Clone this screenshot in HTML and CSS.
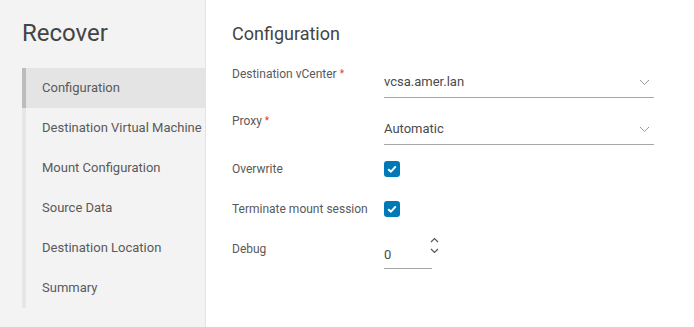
FILE: index.html
```html
<!DOCTYPE html>
<html>
<head>
<meta charset="utf-8">
<link rel="stylesheet" href="styles.css">
</head>
<body>
<div class="page">
  <aside class="sidebar">
    <h1 class="side-title">Recover</h1>
    <nav class="steps">
      <div class="step active">Configuration</div>
      <div class="step">Destination Virtual Machine</div>
      <div class="step">Mount Configuration</div>
      <div class="step">Source Data</div>
      <div class="step">Destination Location</div>
      <div class="step">Summary</div>
    </nav>
  </aside>
  <main class="main">
    <h2 class="main-title">Configuration</h2>
    <div class="row row-select first">
      <label class="label">Destination vCenter <span class="req">*</span></label>
      <div class="select">
        <span class="value">vcsa.amer.lan</span>
        <svg class="chev" width="11" height="7" viewBox="0 0 11 7"><path d="M1 1 L5.5 5.5 L10 1" fill="none" stroke="#9a9a9a" stroke-width="1"/></svg>
      </div>
    </div>
    <div class="row row-select">
      <label class="label">Proxy <span class="req">*</span></label>
      <div class="select">
        <span class="value">Automatic</span>
        <svg class="chev" width="11" height="7" viewBox="0 0 11 7"><path d="M1 1 L5.5 5.5 L10 1" fill="none" stroke="#9a9a9a" stroke-width="1"/></svg>
      </div>
    </div>
    <div class="row row-check first-check">
      <label class="label">Overwrite</label>
      <span class="checkbox"><svg width="16" height="16" viewBox="0 0 16 16"><path d="M4.2 8.2 L6.9 10.6 L11.8 5.4" fill="none" stroke="#fff" stroke-width="2"/></svg></span>
    </div>
    <div class="row row-check">
      <label class="label">Terminate mount session</label>
      <span class="checkbox"><svg width="16" height="16" viewBox="0 0 16 16"><path d="M4.2 8.2 L6.9 10.6 L11.8 5.4" fill="none" stroke="#fff" stroke-width="2"/></svg></span>
    </div>
    <div class="row row-number">
      <label class="label">Debug</label>
      <div class="number">
        <span class="num-value">0</span>
        <span class="spin">
          <svg width="9" height="6" viewBox="0 0 9 6"><path d="M1 5 L4.5 1.5 L8 5" fill="none" stroke="#555" stroke-width="1.2"/></svg>
          <svg width="9" height="6" viewBox="0 0 9 6"><path d="M1 1 L4.5 4.5 L8 1" fill="none" stroke="#555" stroke-width="1.2"/></svg>
        </span>
      </div>
    </div>
  </main>
</div>
</body>
</html>
```

FILE: styles.css
```css
html, body {
  margin: 0;
  padding: 0;
  background: #fff;
  font-family: Roboto, "Liberation Sans", sans-serif;
}
.page {
  display: flex;
  width: 694px;
  height: 327px;
}
.sidebar {
  flex: none;
  width: 206px;
  background: #f3f3f3;
  border-right: 1px solid #e4e4e4;
  padding-left: 22px;
  box-sizing: border-box;
}
.side-title {
  margin: 19px 0 0 0;
  font-size: 24px;
  line-height: 28px;
  font-weight: 400;
  color: #444;
}
.steps {
  margin-top: 21px;
  border-left: 4px solid #e6e6e6;
}
.step {
  height: 40px;
  line-height: 40px;
  padding-left: 16px;
  font-size: 13px;
  color: #5a5a5a;
  white-space: nowrap;
}
.step.active {
  background: #e4e4e4;
  margin-left: -4px;
  border-left: 4px solid #bcbcbc;
}
.main {
  flex: 1;
  padding-left: 26px;
  padding-right: 40px;
}
.main-title {
  margin: 22px 0 0 0;
  font-size: 18px;
  line-height: 24px;
  font-weight: 400;
  color: #444;
}
.row {
  display: grid;
  grid-template-columns: 152px 270px;
  align-items: start;
}
.label {
  font-size: 12px;
  line-height: 16px;
  color: #5a5a5a;
}
.req {
  color: #d0402a;
  font-size: 10px;
  position: relative;
  top: -1px;
}
.row-select.first {
  margin-top: 20px;
}
.row-select {
  margin-top: 15px;
}
.select {
  height: 31px;
  border-bottom: 1px solid #a6a6a6;
  display: flex;
  align-items: center;
  justify-content: space-between;
}
.value {
  font-size: 13px;
  color: #4a4a4a;
}
.chev {
  margin-right: 4px;
  margin-top: 2px;
}
.row-check {
  height: 24px;
  align-items: center;
  margin-top: 16px;
}
.row-check.first-check {
  margin-top: 12px;
}
.checkbox {
  width: 16px;
  height: 16px;
  border-radius: 3px;
  background: #0079b8;
  display: block;
}
.checkbox svg {
  display: block;
}
.row-number {
  margin-top: 20px;
}
.number {
  width: 48px;
  height: 27px;
  border-bottom: 1px solid #a6a6a6;
  position: relative;
}
.num-value {
  position: absolute;
  left: 0;
  top: 6px;
  font-size: 13px;
  line-height: 16px;
  color: #4a4a4a;
}
.spin {
  position: absolute;
  left: 46px;
  top: -4px;
  display: flex;
  flex-direction: column;
  gap: 5px;
}
.spin svg {
  display: block;
}
```
